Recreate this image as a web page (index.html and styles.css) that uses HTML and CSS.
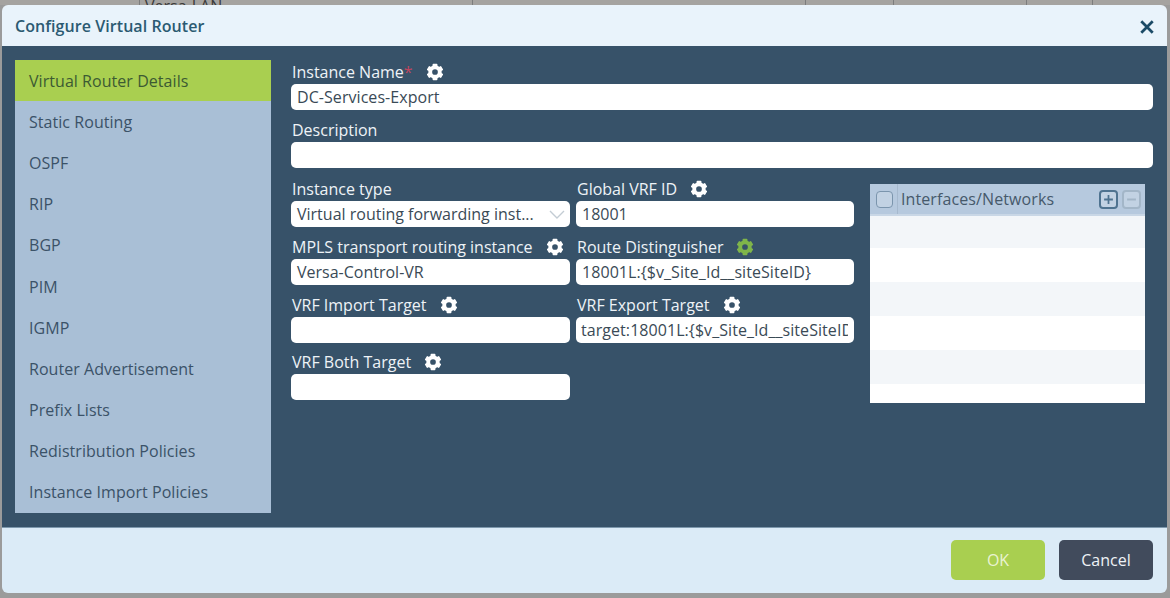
FILE: index.html
```html
<!DOCTYPE html>
<html lang="en">
<head>
<meta charset="utf-8">
<title>Configure Virtual Router</title>
<link rel="stylesheet" href="styles.css">
</head>
<body>
<svg class="defs" width="0" height="0" aria-hidden="true">
  <symbol id="gear" viewBox="0 0 24 24">
    <path fill-rule="evenodd" d="M12 3a9 9 0 1 0 0 18 9 9 0 0 0 0-18zM12 8.200a3.800 3.800 0 1 1 0 7.600 3.800 3.800 0 0 1 0-7.600z"/>
    <g>
      <rect x="8.800" y="1" width="6.400" height="4" rx="1"/>
      <rect x="8.800" y="1" width="6.400" height="4" rx="1" transform="rotate(60 12 12)"/>
      <rect x="8.800" y="1" width="6.400" height="4" rx="1" transform="rotate(120 12 12)"/>
      <rect x="8.800" y="1" width="6.400" height="4" rx="1" transform="rotate(180 12 12)"/>
      <rect x="8.800" y="1" width="6.400" height="4" rx="1" transform="rotate(240 12 12)"/>
      <rect x="8.800" y="1" width="6.400" height="4" rx="1" transform="rotate(300 12 12)"/>
    </g>
  </symbol>
</svg>
<div class="backdrop">
  <div class="bg-cell c1"></div>
  <div class="bg-cell c2"><span>Versa-LAN</span></div>
  <div class="bg-cell c3"></div>
  <div class="bg-cell c4"></div>
  <div class="bg-cell c5"></div>
  <div class="bg-cell c6"></div>
  <div class="bg-cell c7"></div>
</div>
<div class="modal">
  <header class="modal-head">
    <h1>Configure Virtual Router</h1>
    <svg class="close" viewBox="0 0 14 14"><path d="M2 2l10 10M12 2L2 12"/></svg>
  </header>
  <main class="modal-body">
    <nav class="side">
      <a class="active">Virtual Router Details</a>
      <a>Static Routing</a>
      <a>OSPF</a>
      <a>RIP</a>
      <a>BGP</a>
      <a>PIM</a>
      <a>IGMP</a>
      <a>Router Advertisement</a>
      <a>Prefix Lists</a>
      <a>Redistribution Policies</a>
      <a>Instance Import Policies</a>
    </nav>
    <section class="form">
      <div class="field">
        <label>Instance Name<em>*</em><svg class="gear"><use href="#gear"/></svg></label>
        <div class="input wide">DC-Services-Export</div>
      </div>
      <div class="field">
        <label>Description</label>
        <div class="input"></div>
      </div>
      <div class="lower">
        <div class="grid">
          <div class="field">
            <label>Instance type</label>
            <div class="input select"><span>Virtual routing forwarding inst...</span><svg class="chev" viewBox="0 0 16 9"><path d="M1 1l7 7 7-7"/></svg></div>
          </div>
          <div class="field">
            <label>Global VRF ID<svg class="gear"><use href="#gear"/></svg></label>
            <div class="input">18001</div>
          </div>
          <div class="field">
            <label>MPLS transport routing instance<svg class="gear"><use href="#gear"/></svg></label>
            <div class="input">Versa-Control-VR</div>
          </div>
          <div class="field">
            <label>Route Distinguisher<svg class="gear green"><use href="#gear"/></svg></label>
            <div class="input wide">18001L:{$v_Site_Id__siteSiteID}</div>
          </div>
          <div class="field">
            <label>VRF Import Target<svg class="gear"><use href="#gear"/></svg></label>
            <div class="input"></div>
          </div>
          <div class="field">
            <label>VRF Export Target<svg class="gear"><use href="#gear"/></svg></label>
            <div class="input wide"><span class="clip">target:18001L:{$v_Site_Id__siteSiteID}</span></div>
          </div>
          <div class="field tight">
            <label>VRF Both Target<svg class="gear"><use href="#gear"/></svg></label>
            <div class="input"></div>
          </div>
        </div>
        <div class="table">
          <div class="thead">
            <div class="check-cell"><span class="check"></span></div>
            <div class="title">Interfaces/Networks</div>
            <span class="btn"><svg viewBox="0 0 10 10"><path d="M5 1v8M1 5h8"/></svg></span>
            <span class="btn off"><svg viewBox="0 0 10 10"><path d="M1 5h8"/></svg></span>
          </div>
          <div class="row"></div>
          <div class="row"></div>
          <div class="row"></div>
          <div class="row"></div>
          <div class="row"></div>
          <div class="row last"></div>
        </div>
      </div>
    </section>
  </main>
  <footer class="modal-foot">
    <button class="ok">OK</button>
    <button class="cancel">Cancel</button>
  </footer>
</div>
</body>
</html>
```
FILE: styles.css
```css
* { box-sizing: border-box; }
html, body { margin: 0; height: 598px; overflow: hidden; }
body {
  position: relative;
  background: #9b9b9b;
  font-family: "Open Sans", "Liberation Sans", sans-serif;
  font-size: 16px;
  padding: 5px 3px 5px 2px;
}
.defs { position: absolute; }
.backdrop {
  position: absolute;
  top: 0; left: 0; right: 0;
  height: 5px;
  display: flex;
  overflow: hidden;
  background: #a5a3a0;
}
.bg-cell { border-right: 1px solid #7d7d7d; height: 5px; font-size: 16px; color: #3a3a3a; line-height: 16px; padding-left: 5px; overflow: hidden; }
.bg-cell span { display: block; margin-top: -2px; }
.c1 { width: 140px; }
.c2 { width: 333px; }
.c3 { width: 333px; }
.c4 { width: 88px; }
.c5 { width: 133px; }
.c6 { width: 66px; }
.c7 { width: 30px; border-right: 0; }

.modal {
  position: relative;
  height: 588px;
  display: flex;
  flex-direction: column;
  border-radius: 6px;
  overflow: hidden;
}
.modal-head {
  height: 41px;
  flex: none;
  background: #e9f3fb;
  display: flex;
  align-items: center;
  justify-content: space-between;
  padding: 0 12px 0 13px;
}
.modal-head h1 {
  margin: 0;
  font-size: 16px;
  font-weight: 600;
  color: #2b5a72;
  letter-spacing: 0.06px;
}
.close { width: 16px; height: 16px; margin-top: 3px; }
.close path { fill: none; stroke: #1b4a66; stroke-width: 2.4; }

.modal-body {
  flex: 1;
  background: #375269;
  display: flex;
  padding: 14px 14px 14px 13px;
  border-bottom: 1px solid #7e99ae;
}
.side {
  width: 256px;
  flex: none;
  background: #a9bfd6;
  display: flex;
  flex-direction: column;
  height: 453px;
}
.side a {
  height: 41.2px;
  flex: none;
  display: flex;
  align-items: center;
  padding-left: 14px;
  color: #3b5268;
  font-size: 16px;
  letter-spacing: 0.05px;
}
.side a.active { background: #a9cf50; color: #3c5a33; }

.form { flex: 1; margin-left: 20px; min-width: 0; }
.field { display: flex; flex-direction: column; }
.form > .field { margin-bottom: 8px; }
.tight { margin-top: -1px; }
.field label {
  height: 24px;
  display: flex;
  align-items: center;
  padding-left: 1px;
  color: #eef3f7;
  font-size: 16px;
  white-space: nowrap;
}
.field label em { color: #c0455f; font-style: normal; }
.gear { width: 18px; height: 18px; margin-left: 13px; fill: #fff; flex: none; }
.gear.green { fill: #7fb54a; }
.input {
  height: 26px;
  background: #fff;
  border-radius: 5px;
  padding: 0 6px;
  color: #3a4a56;
  font-size: 16px;
  line-height: 27px;
  white-space: nowrap;
  overflow: hidden;
}
.input.wide { letter-spacing: 0.06px; }
.clip { display: block; overflow: hidden; margin-left: -1px; }
.select { display: flex; align-items: center; justify-content: space-between; padding-right: 5px; }
.chev { width: 16px; height: 9px; flex: none; }
.chev path { fill: none; stroke: #c3ccd4; stroke-width: 1.4; }

.lower { display: flex; margin-top: 9px; }
.grid {
  width: 563px;
  flex: none;
  display: grid;
  grid-template-columns: 279px 278px;
  column-gap: 6px;
  row-gap: 8px;
  align-content: start;
}
.table {
  margin-left: 16px;
  margin-top: 7px;
  width: 275px;
  height: 219px;
  flex: none;
  background: #fff;
  display: flex;
  flex-direction: column;
}
.thead {
  height: 32px;
  flex: none;
  background: #b6c9de;
  border-bottom: 2px solid #c9d7e6;
  display: flex;
  align-items: center;
  color: #46596b;
}
.check-cell {
  width: 28px;
  height: 100%;
  border-right: 1px solid #a6b9ce;
  display: flex;
  align-items: center;
  padding-left: 6px;
}
.check {
  width: 17px; height: 17px;
  border: 1.5px solid #7b95ad;
  border-radius: 4px;
  background: #c2d2e3;
}
.title { flex: 1; padding-left: 3px; font-size: 16px; letter-spacing: 0.1px; }
.btn {
  width: 19px; height: 19px;
  border: 2px solid #4f7390;
  border-radius: 4px;
  margin-right: 4px;
  display: flex;
  align-items: center;
  justify-content: center;
  background: #c2d2e3;
}
.btn svg { width: 11px; height: 11px; }
.btn path { fill: none; stroke: #4f7390; stroke-width: 1.6; }
.btn.off { border-color: #a3b6c8; }
.btn.off path { stroke: #a3b6c8; }
.row { height: 34px; flex: none; }
.thead + .row { height: 32px; }
.row:nth-of-type(even) { background: #f3f6f9; }
.row:nth-of-type(odd) { background: #fff; }
.row.last { height: auto; flex: 1; }

.modal-foot {
  height: 66px;
  flex: none;
  background: #dbebf7;
  display: flex;
  justify-content: flex-end;
  align-items: flex-start;
  gap: 14px;
  padding: 12px 14px 0 0;
}
.modal-foot button {
  width: 94px;
  height: 40px;
  border: 0;
  border-radius: 5px;
  font-family: inherit;
  font-size: 16px;
}
.ok { background: #a9cf50; color: #e9f3d2; }
.cancel { background: #414b5c; color: #eef2f6; }
```
